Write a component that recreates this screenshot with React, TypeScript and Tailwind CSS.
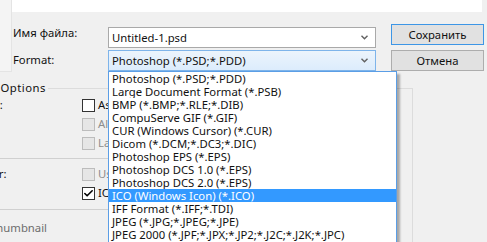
import { Check } from 'lucide-react';

const formats = [
  'Photoshop (*.PSD;*.PDD)',
  'Large Document Format (*.PSB)',
  'BMP (*.BMP;*.RLE;*.DIB)',
  'CompuServe GIF (*.GIF)',
  'CUR (Windows Cursor) (*.CUR)',
  'Dicom (*.DCM;*.DC3;*.DIC)',
  'Photoshop EPS (*.EPS)',
  'Photoshop DCS 1.0 (*.EPS)',
  'Photoshop DCS 2.0 (*.EPS)',
  'ICO (Windows Icon) (*.ICO)',
  'IFF Format (*.IFF;*.TDI)',
  'JPEG (*.JPG;*.JPEG;*.JPE)',
  'JPEG 2000 (*.JPF;*.JPX;*.JP2;*.J2C;*.J2K;*.JPC)',
  'JPEG Stereo (*.JPS)',
];

const selected = 9;

function Chevron() {
  return (
    <svg width="7" height="5" viewBox="0 0 7 5" className="shrink-0">
      <path d="M0.5 0.8 L3.5 3.8 L6.5 0.8" fill="none" stroke="#606060" strokeWidth="1.4" />
    </svg>
  );
}

function Box({ state }: { state: 'off' | 'disabled' | 'on' }) {
  if (state === 'disabled') {
    return <div className="w-[13px] h-[13px] shrink-0 border border-[#bcbcbc] bg-[#e6e6e6]" />;
  }
  return (
    <div className="w-[13px] h-[13px] shrink-0 border border-[#333333] bg-white flex items-center justify-center">
      {state === 'on' && <Check size={11} strokeWidth={3.5} color="#000" />}
    </div>
  );
}

function OptionRow({ label, state, text }: { label?: string; state: 'off' | 'disabled' | 'on'; text: string }) {
  return (
    <div className="flex items-center h-[19px]">
      <div className="w-[82px] shrink-0 whitespace-nowrap">
        {label && <span className="ml-[-25px]">{label}</span>}
      </div>
      <Box state={state} />
      <span className={`ml-[3px] whitespace-nowrap ${state === 'disabled' ? 'text-[#8d8d8d]' : ''}`}>{text}</span>
    </div>
  );
}

export default function App() {
  return (
    <div
      className="relative w-[487px] h-[242px] overflow-hidden bg-[#f0f0f0] text-[11.3px] text-[#111]"
      style={{ fontFamily: '"Noto Sans", "Open Sans", sans-serif' }}
    >
      <div className="flex h-[72px]">
        <div className="w-[12px] h-[72px] shrink-0 bg-[#f4f4f4] border-r border-b border-[#e4e4e4]" />
        <div className="flex flex-col">
          <div className="w-[470px] h-[12px] bg-white" />

          <div className="flex items-start mt-[12px] pl-[1px]">
            <div className="w-[95px] leading-[17px]">Имя файла:</div>
            <div className="mt-[3px] w-[268px] h-[21px] border border-[#a9a9a9] bg-white flex items-center pl-[3px] pr-[7px]">
              <span className="flex-1 leading-[16px]">Untitled-1.psd</span>
              <Chevron />
            </div>
            <button className="ml-[15px] w-[93px] h-[21px] border border-[#3d96e6] bg-[#e1e1e1] leading-[17px]">
              Сохранить
            </button>
          </div>

          <div className="flex items-start mt-[2px] pl-[1px]">
            <div className="w-[95px] leading-[19px]">Format:</div>
            <div className="w-[268px] h-[21px] border border-[#7eb4ea] bg-gradient-to-b from-[#ecf4fc] to-[#dcecfc] flex items-center pl-[3px] pr-[7px]">
              <span className="flex-1 leading-[16px]">Photoshop (*.PSD;*.PDD)</span>
              <Chevron />
            </div>
            <button className="ml-[15px] w-[93px] h-[21px] border border-[#adadad] bg-[#e1e1e1] leading-[17px]">
              Отмена
            </button>
          </div>
        </div>
      </div>

      <div className="w-[413px] mt-[9px]">
        <div className="flex items-center h-[14px]">
          <div className="w-[46px] shrink-0 flex justify-end whitespace-nowrap tracking-[0.5px]">Save Options</div>
          <div className="flex-1 h-[7px] self-end ml-[2px] border-t border-r border-[#dcdcdc]" />
        </div>
        <div className="border-r border-[#dcdcdc] pt-[1px] h-[160px]">
          <OptionRow label="Save:" state="off" text="As a Copy" />
          <OptionRow state="disabled" text="Alpha Channels" />
          <OptionRow state="disabled" text="Layers" />
          <div className="mt-[5px] h-px w-[320px] bg-[#d0d0d0]" />
          <div className="h-[6px]" />
          <OptionRow label="Color:" state="disabled" text="Use Proof Setup" />
          <OptionRow state="on" text="ICC Profile" />
          <div className="mt-[6px] h-px w-[320px] bg-[#d0d0d0]" />
          <div className="mt-[11px] w-[47px] flex justify-end leading-[14px] text-[#6d6d6d] whitespace-nowrap">
            Thumbnail
          </div>
        </div>
      </div>

      <div className="absolute left-[108px] top-[71px] w-[289px] border border-[#5b9ee6] bg-white shadow-[3px_3px_2px_rgba(0,0,0,0.3)]">
        {formats.map((f, i) => (
          <div
            key={f}
            className={`h-[13px] leading-[13px] pl-[3px] whitespace-nowrap overflow-hidden ${
              i === selected ? 'bg-[#3399ff] text-white' : ''
            }`}
          >
            {f}
          </div>
        ))}
      </div>
    </div>
  );
}
